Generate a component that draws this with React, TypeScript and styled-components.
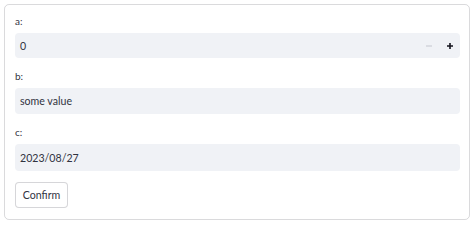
import React from "react";
import styled, { createGlobalStyle } from "styled-components";

const Global = createGlobalStyle`
  html, body { margin: 0; padding: 0; background: #ffffff; }
  body { font-family: "Source Sans Pro", Lato, "Noto Sans", sans-serif; color: rgb(49, 51, 63); }
`;

const Page = styled.div`
  padding: 4px;
  width: 474px;
  box-sizing: border-box;
`;

const Form = styled.form`
  border: 1px solid rgba(49, 51, 63, 0.18);
  border-radius: 5px;
  padding: 9px 9px 10px 10px;
  display: flex;
  flex-direction: column;
  gap: 11px;
  height: 216px;
  box-sizing: border-box;
`;

const Field = styled.div`
  display: flex;
  flex-direction: column;
  gap: 5px;
`;

const Label = styled.label`
  font-size: 10px;
  line-height: 15px;
  height: 14px;
  color: rgb(49, 51, 63);
`;

const InputBox = styled.div<{ $h?: number }>`
  display: flex;
  align-items: center;
  height: ${(p) => p.$h ?? 25}px;
  background: #f0f2f6;
  border-radius: 4px;
`;

const Value = styled.span`
  flex: 1;
  padding-left: 5px;
  font-size: 10.6px;
  color: rgb(49, 51, 63);
`;

const Step = styled.span<{ $disabled?: boolean }>`
  width: 21px;
  height: 100%;
  display: flex;
  align-items: center;
  justify-content: center;
`;

const Button = styled.button`
  align-self: flex-start;
  height: 26px;
  width: 53px;
  padding: 0;
  border: 1px solid rgba(49, 51, 63, 0.2);
  border-radius: 4px;
  background: #ffffff;
  font-family: inherit;
  font-size: 10.6px;
  color: rgb(49, 51, 63);
`;

const Minus = ({ color }: { color: string }) => (
  <svg width="8" height="8" viewBox="0 0 8 8">
    <path d="M1 4h6" stroke={color} strokeWidth="1" />
  </svg>
);
const Plus = ({ color }: { color: string }) => (
  <svg width="8" height="8" viewBox="0 0 8 8">
    <path d="M1 4h6M4 1v6" stroke={color} strokeWidth="1.6" />
  </svg>
);

export default function App() {
  return (
    <Page>
      <Global />
      <Form onSubmit={(e) => e.preventDefault()}>
        <Field>
          <Label>a:</Label>
          <InputBox>
            <Value>0</Value>
            <Step $disabled>
              <Minus color="rgba(49,51,63,0.22)" />
            </Step>
            <Step>
              <Plus color="rgb(20,20,30)" />
            </Step>
          </InputBox>
        </Field>
        <Field>
          <Label>b:</Label>
          <InputBox $h={26}>
            <Value>some value</Value>
          </InputBox>
        </Field>
        <Field>
          <Label>c:</Label>
          <InputBox $h={27}>
            <Value>2023/08/27</Value>
          </InputBox>
        </Field>
        <Button type="submit">Confirm</Button>
      </Form>
    </Page>
  );
}
